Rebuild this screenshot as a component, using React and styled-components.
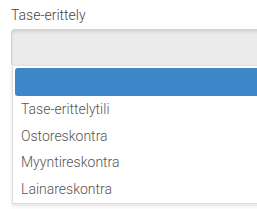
import React from "react";
import styled, { createGlobalStyle } from "styled-components";

const Global = createGlobalStyle`
  body {
    margin: 0;
    background: #fff;
    font-family: Roboto, "Liberation Sans", sans-serif;
  }
`;

const Container = styled.div`
  width: 257px;
  height: 209px;
  overflow: hidden;
  box-sizing: border-box;
  padding: 6px 0 0 11px;
`;

const Label = styled.div`
  font-size: 14px;
  font-weight: 300;
  color: #444;
  line-height: 18px;
  margin-bottom: 5px;
`;

const Field = styled.div`
  position: relative;
  width: 280px;
`;

const SelectBox = styled.div`
  height: 35px;
  background: #ebebeb;
  border: 1px solid #d4d4d4;
  border-bottom: none;
  border-radius: 4px 0 0 0;
  box-shadow: inset 0 2px 3px rgba(0, 0, 0, 0.1);
`;

const Menu = styled.ul`
  position: absolute;
  top: 36px;
  left: 1px;
  right: 0;
  margin: 0;
  padding: 2px 0 1px 2px;
  list-style: none;
  background: #fff;
  border: 1px solid #ddd;
  border-top: 1px solid #e4e4e4;
  box-shadow: 0 2px 4px rgba(0, 0, 0, 0.12);
`;

const Option = styled.li`
  height: ${(p) => (p.$active ? "28px" : "26.5px")};
  line-height: ${(p) => (p.$active ? "28px" : "27px")};
  padding-left: 6px;
  font-size: 14px;
  font-weight: 300;
  color: #555;
  border-radius: 3px 0 0 3px;
  background: ${(p) => (p.$active ? "#3d87c8" : "transparent")};
`;

const options = ["Tase-erittelytili", "Ostoreskontra", "Myyntireskontra", "Lainareskontra"];

export default function App() {
  return (
    <Container>
      <Global />
      <Label>Tase-erittely</Label>
      <Field>
        <SelectBox />
        <Menu>
          <Option $active />
          {options.map((o) => (
            <Option key={o}>{o}</Option>
          ))}
        </Menu>
      </Field>
    </Container>
  );
}
